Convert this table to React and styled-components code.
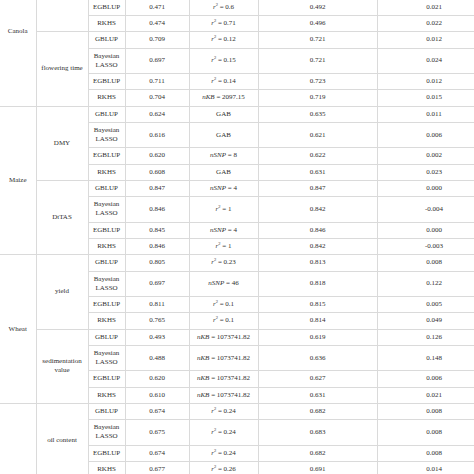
import React from 'react'
import styled, { createGlobalStyle } from 'styled-components'

const GlobalStyle = createGlobalStyle`
  html, body {
    margin: 0;
    padding: 0;
    background: #ffffff;
  }
`;

const Viewport = styled.div`
  width: 474px;
  height: 474px;
  overflow: hidden;
  background: #ffffff;
`;

// the table continues above and below the visible crop
const Table = styled.table`
  width: 491px;
  margin-top: -43px;
  border-collapse: collapse;
  table-layout: fixed;
  font-family: "Liberation Serif", "Times New Roman", serif;
  font-size: 7px;
  line-height: 9px;
  color: #303030;
`;

const Col = styled.col`
  width: ${(p) => p.$w}px;
`;

const Row = styled.tr`
  height: ${(p) => (p.$tall ? '25.33px' : '16.33px')};
`;

const Cell = styled.td`
  border: 1px solid #dadada;
  padding: 0 2px;
  text-align: center;
  vertical-align: middle;
`;

const CropCell = styled(Cell)`
  border-left: none;
`;

const Var = styled.i`
  font-style: italic;
`;

const Sup = styled.sup`
  font-size: 4.5px;
  line-height: 0;
  vertical-align: 3px;
`;

const r2 = (v) => (
  <>
    <Var>r</Var>
    <Sup>2</Sup> = {v}
  </>
)
const nkb = (v) => (
  <>
    <Var>nKB</Var> = {v}
  </>
)
const nsnp = (v) => (
  <>
    <Var>nSNP</Var> = {v}
  </>
)

const widths = [36, 52, 37, 64, 69, 119, 114]
const methods = ['GBLUP', 'Bayesian LASSO', 'EGBLUP', 'RKHS']
const empty = ['', '', '', '']

const crops = [
  {
    name: 'Canola',
    traits: [
      {
        name: '',
        hiddenTop: 2,
        rows: [
          empty,
          empty,
          ['0.471', r2('0.6'), '0.492', '0.021'],
          ['0.474', r2('0.71'), '0.496', '0.022'],
        ],
      },
      {
        name: 'flowering time',
        rows: [
          ['0.709', r2('0.12'), '0.721', '0.012'],
          ['0.697', r2('0.15'), '0.721', '0.024'],
          ['0.711', r2('0.14'), '0.723', '0.012'],
          ['0.704', nkb('2097.15'), '0.719', '0.015'],
        ],
      },
    ],
  },
  {
    name: 'Maize',
    traits: [
      {
        name: 'DMY',
        rows: [
          ['0.624', 'GAB', '0.635', '0.011'],
          ['0.616', 'GAB', '0.621', '0.006'],
          ['0.620', nsnp('8'), '0.622', '0.002'],
          ['0.608', 'GAB', '0.631', '0.023'],
        ],
      },
      {
        name: 'DtTAS',
        rows: [
          ['0.847', nsnp('4'), '0.847', '0.000'],
          ['0.846', r2('1'), '0.842', '-0.004'],
          ['0.845', nsnp('4'), '0.846', '0.000'],
          ['0.846', r2('1'), '0.842', '-0.003'],
        ],
      },
    ],
  },
  {
    name: 'Wheat',
    traits: [
      {
        name: 'yield',
        rows: [
          ['0.805', r2('0.23'), '0.813', '0.008'],
          ['0.697', nsnp('46'), '0.818', '0.122'],
          ['0.811', r2('0.1'), '0.815', '0.005'],
          ['0.765', r2('0.1'), '0.814', '0.049'],
        ],
      },
      {
        name: 'sedimentation value',
        rows: [
          ['0.493', nkb('1073741.82'), '0.619', '0.126'],
          ['0.488', nkb('1073741.82'), '0.636', '0.148'],
          ['0.620', nkb('1073741.82'), '0.627', '0.006'],
          ['0.610', nkb('1073741.82'), '0.631', '0.021'],
        ],
      },
    ],
  },
  {
    name: '',
    traits: [
      {
        name: 'oil content',
        rows: [
          ['0.674', r2('0.24'), '0.682', '0.008'],
          ['0.675', r2('0.24'), '0.683', '0.008'],
          ['0.674', r2('0.24'), '0.682', '0.008'],
          ['0.677', r2('0.26'), '0.691', '0.014'],
        ],
      },
      {
        name: '',
        hiddenAll: true,
        rows: [empty, empty, empty, empty],
      },
    ],
  },
]

function App() {
  const body = []
  crops.forEach((crop, ci) => {
    const span = crop.traits.length * 4
    crop.traits.forEach((trait, ti) => {
      trait.rows.forEach((vals, ri) => {
        const hidden =
          trait.hiddenAll || (trait.hiddenTop && ri < trait.hiddenTop)
        body.push(
          <Row key={`${ci}-${ti}-${ri}`} $tall={ri === 1}>
            {ti === 0 && ri === 0 && (
              <CropCell rowSpan={span}>{crop.name}</CropCell>
            )}
            {ri === 0 && <Cell rowSpan={4}>{trait.name}</Cell>}
            <Cell>{hidden ? '' : methods[ri]}</Cell>
            {vals.map((v, vi) => (
              <Cell key={vi}>{v}</Cell>
            ))}
          </Row>
        )
      })
    })
  })

  return (
    <Viewport>
      <GlobalStyle />
      <Table>
        <colgroup>
          {widths.map((w, i) => (
            <Col key={i} $w={w} />
          ))}
        </colgroup>
        <tbody>{body}</tbody>
      </Table>
    </Viewport>
  )
}

export default App
